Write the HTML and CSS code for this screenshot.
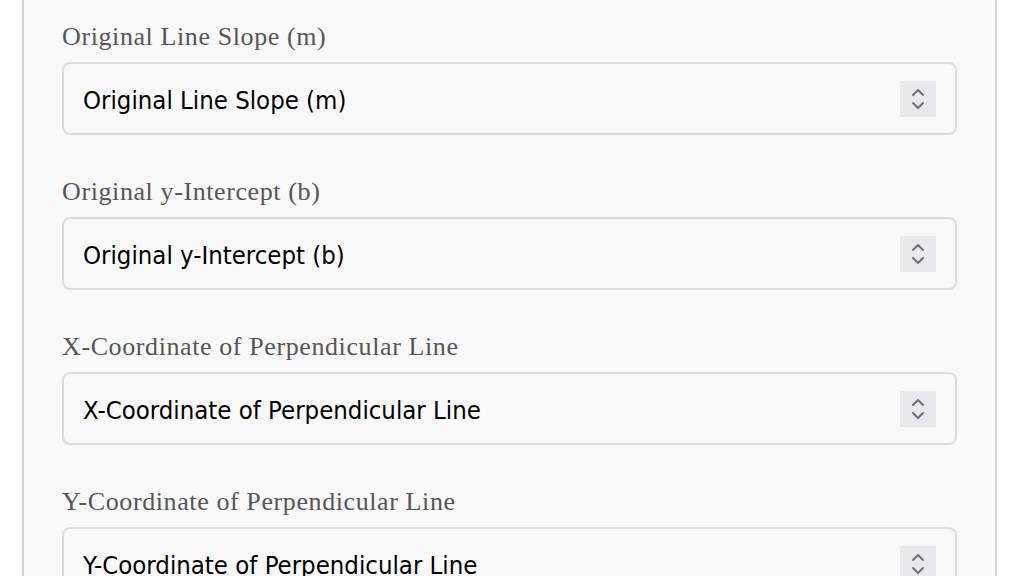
FILE: index.html
```html
<!DOCTYPE html>
<html lang="en">
<head>
  <meta charset="UTF-8" />
  <title>Perpendicular Line Calculator</title>
  <link rel="stylesheet" href="styles.css">
</head>
<body>
  <div class="container">
    <div class="form-group">
      <label for="slope">Original Line Slope (m)</label>
      <div class="field">
        <input type="text" id="slope" placeholder="Original Line Slope (m)" />
        <span class="spin"><svg viewBox="0 0 36 36" width="36" height="36"><path d="M13 14l5-5 5 5M13 22l5 5 5-5" fill="none" stroke="#6f6f78" stroke-width="2" stroke-linecap="round" stroke-linejoin="round"/></svg></span>
      </div>
    </div>

    <div class="form-group">
      <label for="intercept">Original y-Intercept (b)</label>
      <div class="field">
        <input type="text" id="intercept" placeholder="Original y-Intercept (b)" />
        <span class="spin"><svg viewBox="0 0 36 36" width="36" height="36"><path d="M13 14l5-5 5 5M13 22l5 5 5-5" fill="none" stroke="#6f6f78" stroke-width="2" stroke-linecap="round" stroke-linejoin="round"/></svg></span>
      </div>
    </div>

    <div class="form-group">
      <label for="xcoord">X-Coordinate of Perpendicular Line</label>
      <div class="field">
        <input type="text" id="xcoord" placeholder="X-Coordinate of Perpendicular Line" />
        <span class="spin"><svg viewBox="0 0 36 36" width="36" height="36"><path d="M13 14l5-5 5 5M13 22l5 5 5-5" fill="none" stroke="#6f6f78" stroke-width="2" stroke-linecap="round" stroke-linejoin="round"/></svg></span>
      </div>
    </div>

    <div class="form-group">
      <label for="ycoord">Y-Coordinate of Perpendicular Line</label>
      <div class="field">
        <input type="text" id="ycoord" placeholder="Y-Coordinate of Perpendicular Line" />
        <span class="spin"><svg viewBox="0 0 36 36" width="36" height="36"><path d="M13 14l5-5 5 5M13 22l5 5 5-5" fill="none" stroke="#6f6f78" stroke-width="2" stroke-linecap="round" stroke-linejoin="round"/></svg></span>
      </div>
    </div>
  </div>
</body>
</html>
```

FILE: styles.css
```css
body {
  font-family: "Liberation Serif", serif;
  background-color: #ffffff;
  margin: 0;
}

.container {
  width: 975px;
  box-sizing: border-box;
  margin: -20px 0 0 22px;
  padding: 40px 38px 20px;
  background-color: #f9f9f9;
  border: 2px solid #d6d6d6;
}

.form-group {
  margin-bottom: 42px;
}

label {
  display: block;
  color: #555;
  font-size: 26px;
  letter-spacing: 0.6px;
  line-height: 30px;
  margin-bottom: 10px;
}

.field {
  display: flex;
  align-items: center;
  height: 73px;
  box-sizing: border-box;
  padding: 0 19px;
  border: 2px solid #dcdcdc;
  border-radius: 8px;
  background-color: #f9f9f9;
}

.field input {
  flex: 1;
  border: none;
  outline: none;
  background: transparent;
  font-family: "DejaVu Sans Condensed", "DejaVu Sans", sans-serif;
  font-stretch: condensed;
  font-size: 25.5px;
  padding: 3px 0 0;
  color: #000;
}

.field input::placeholder {
  color: #000;
}

.spin {
  width: 36px;
  height: 36px;
  background-color: #e9e9ed;
}

.spin svg {
  display: block;
}
```
